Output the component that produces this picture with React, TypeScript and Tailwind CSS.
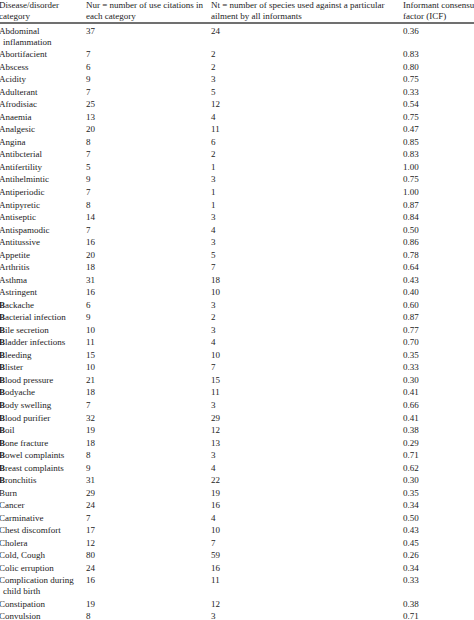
import React from "react";

type Row = { name: string[]; bold?: boolean; nur: string; nt: string; icf: string };

const rows: Row[] = [
  { name: ["Abdominal", "inflammation"], nur: "37", nt: "24", icf: "0.36" },
  { name: ["Abortifacient"], nur: "7", nt: "2", icf: "0.83" },
  { name: ["Abscess"], nur: "6", nt: "2", icf: "0.80" },
  { name: ["Acidity"], nur: "9", nt: "3", icf: "0.75" },
  { name: ["Adulterant"], nur: "7", nt: "5", icf: "0.33" },
  { name: ["Afrodisiac"], nur: "25", nt: "12", icf: "0.54" },
  { name: ["Anaemia"], nur: "13", nt: "4", icf: "0.75" },
  { name: ["Analgesic"], nur: "20", nt: "11", icf: "0.47" },
  { name: ["Angina"], nur: "8", nt: "6", icf: "0.85" },
  { name: ["Antibcterial"], nur: "7", nt: "2", icf: "0.83" },
  { name: ["Antifertility"], nur: "5", nt: "1", icf: "1.00" },
  { name: ["Antihelmintic"], nur: "9", nt: "3", icf: "0.75" },
  { name: ["Antiperiodic"], nur: "7", nt: "1", icf: "1.00" },
  { name: ["Antipyretic"], nur: "8", nt: "1", icf: "0.87" },
  { name: ["Antiseptic"], nur: "14", nt: "3", icf: "0.84" },
  { name: ["Antispamodic"], nur: "7", nt: "4", icf: "0.50" },
  { name: ["Antitussive"], nur: "16", nt: "3", icf: "0.86" },
  { name: ["Appetite"], nur: "20", nt: "5", icf: "0.78" },
  { name: ["Arthritis"], nur: "18", nt: "7", icf: "0.64" },
  { name: ["Asthma"], nur: "31", nt: "18", icf: "0.43" },
  { name: ["Astringent"], nur: "16", nt: "10", icf: "0.40" },
  { name: ["Backache"], bold: true, nur: "6", nt: "3", icf: "0.60" },
  { name: ["Bacterial infection"], bold: true, nur: "9", nt: "2", icf: "0.87" },
  { name: ["Bile secretion"], bold: true, nur: "10", nt: "3", icf: "0.77" },
  { name: ["Bladder infections"], bold: true, nur: "11", nt: "4", icf: "0.70" },
  { name: ["Bleeding"], bold: true, nur: "15", nt: "10", icf: "0.35" },
  { name: ["Blister"], bold: true, nur: "10", nt: "7", icf: "0.33" },
  { name: ["Blood pressure"], bold: true, nur: "21", nt: "15", icf: "0.30" },
  { name: ["Bodyache"], bold: true, nur: "18", nt: "11", icf: "0.41" },
  { name: ["Body swelling"], bold: true, nur: "7", nt: "3", icf: "0.66" },
  { name: ["Blood purifier"], bold: true, nur: "32", nt: "29", icf: "0.41" },
  { name: ["Boil"], bold: true, nur: "19", nt: "12", icf: "0.38" },
  { name: ["Bone fracture"], bold: true, nur: "18", nt: "13", icf: "0.29" },
  { name: ["Bowel complaints"], bold: true, nur: "8", nt: "3", icf: "0.71" },
  { name: ["Breast complaints"], bold: true, nur: "9", nt: "4", icf: "0.62" },
  { name: ["Bronchitis"], bold: true, nur: "31", nt: "22", icf: "0.30" },
  { name: ["Burn"], nur: "29", nt: "19", icf: "0.35" },
  { name: ["Cancer"], nur: "24", nt: "16", icf: "0.34" },
  { name: ["Carminative"], nur: "7", nt: "4", icf: "0.50" },
  { name: ["Chest discomfort"], nur: "17", nt: "10", icf: "0.43" },
  { name: ["Cholera"], nur: "12", nt: "7", icf: "0.45" },
  { name: ["Cold, Cough"], nur: "80", nt: "59", icf: "0.26" },
  { name: ["Colic erruption"], nur: "24", nt: "16", icf: "0.34" },
  { name: ["Complication during", "child birth"], nur: "16", nt: "11", icf: "0.33" },
  { name: ["Constipation"], nur: "19", nt: "12", icf: "0.38" },
  { name: ["Convulsion"], nur: "8", nt: "3", icf: "0.71" },
];

function Name({ row }: { row: Row }) {
  return (
    <div className="flex flex-col">
      {row.name.map((line, i) => (
        <span key={i} className={i > 0 ? "pl-[4px]" : ""}>
          {i === 0 && row.bold ? (
            <>
              <span className="font-bold">{line[0]}</span>
              {line.slice(1)}
            </>
          ) : (
            line
          )}
        </span>
      ))}
    </div>
  );
}

export default function App() {
  return (
    <div
      className="w-[474px] h-[620px] overflow-hidden bg-white text-[#1c1c1c] text-[9px] leading-[10.53px]"
      style={{ fontFamily: '"Liberation Serif", "Times New Roman", serif' }}
    >
      <div className="w-[520px] ml-[-1px]">
        <div className="grid grid-cols-[87px_125px_192px_116px] pb-[1px]">
          <div>
            Disease/disorder
            <br />
            category
          </div>
          <div>
            Nur = number of use citations in
            <br />
            each category
          </div>
          <div>
            Nt = number of species used against a particular
            <br />
            ailment by all informants
          </div>
          <div>
            Informant consensus
            <br />
            factor (ICF)
          </div>
        </div>
        <div className="h-[2px] bg-[#707070]" />
        <div className="pt-[1px]">
          {rows.map((r, i) => (
            <div key={i} className="grid grid-cols-[87px_125px_192px_116px] py-[1px]">
              <Name row={r} />
              <div>{r.nur}</div>
              <div>{r.nt}</div>
              <div>{r.icf}</div>
            </div>
          ))}
        </div>
      </div>
    </div>
  );
}
